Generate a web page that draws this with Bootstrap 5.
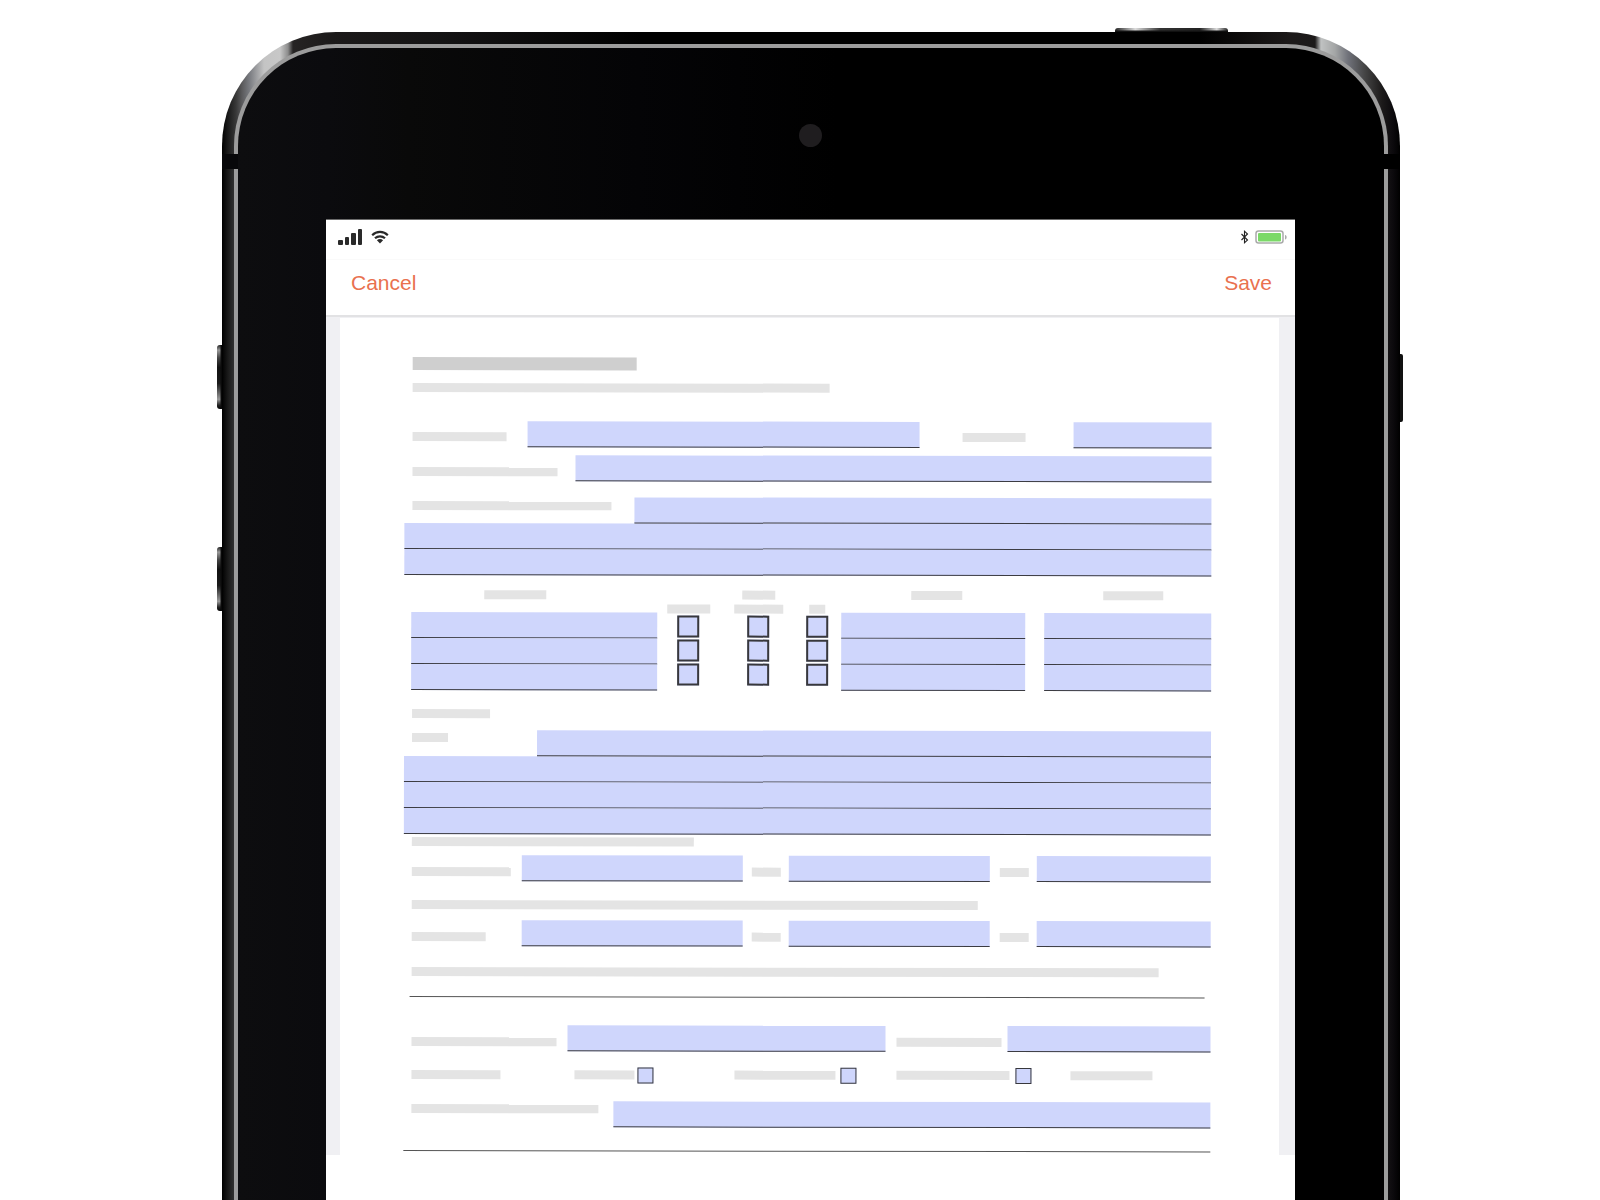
<!DOCTYPE html>
<html lang="en">
<head>
<meta charset="utf-8">
<meta name="viewport" content="width=device-width, initial-scale=1">
<title>Form editor</title>
<link href="https://cdn.jsdelivr.net/npm/bootstrap@5.3.0/dist/css/bootstrap.min.css" rel="stylesheet">
<style>
  :root { --field: #cfd6fc; --bar: #e4e4e4; --ink: #3c3c42; --accent: #e9714f; }
  body { background: #fff; font-family: "Liberation Sans", Arial, sans-serif; }
  .stage { padding: 32px 0 0 22px; overflow: hidden; }

  /* tablet body */
  .tablet {
    width: 100%; max-width: 1178px; padding: 12px 12px 0;
    border-radius: 114px 114px 0 0;
    background: linear-gradient(90deg, #000 0, #161616 5px, #383838 14px, #5a5a5c 20px, #77797e 27px,
      #c4c4c4 42px, #c8c8c8 58px, #8c8c8c 66px, #262424 71px, #1c1a1a 110px, #141314 220px, #000 420px,
      #000 calc(100% - 200px), #1c1919 calc(100% - 110px), #1c1a1a calc(100% - 85px), #c0c2c2 calc(100% - 79px),
      #a4a6a6 calc(100% - 65px), #70727a calc(100% - 52px), #444 calc(100% - 35px), #1c1a1a calc(100% - 18px),
      #0c0a0d calc(100% - 7px), #000 100%);
  }
  .bezel-ring { background: #9c9c9c; padding: 4px 4px 0; border-radius: 102px 102px 0 0; }
  .face {
    padding: 171px 89px 0 88px; border-radius: 98px 98px 0 0;
    background: linear-gradient(90deg, #0d0d0f 0, #0b0b0e 90px, #090909 170px, #040406 400px, #000 600px);
  }
  .camera { width: 23px; height: 23px; top: 92px; left: 50%; margin-left: -12px; background: #1f1d1f; }
  .antenna { top: 122px; width: 16px; height: 15px; background: #08080a; }
  .antenna-l { left: 0; }
  .antenna-r { right: 0; background: #000; }
  .side-key { width: 5px; height: 64px; left: -5px; border-radius: 3px 0 0 3px;
    background: linear-gradient(90deg, transparent 50%, #0a0a0a 90%),
      linear-gradient(180deg, #222 0, #999 8%, #444 20%, #111 35%, #1a1a1a 60%, #999 85%, #222 94%, #000 100%); }
  .key-up { top: 313px; }
  .key-down { top: 515px; }
  .lock-key { width: 3px; height: 68px; right: -3px; top: 322px; background: #111; border-radius: 0 2px 2px 0; }
  .top-key { width: 113px; height: 4px; top: -4px; right: 172px; border-radius: 3px 3px 0 0;
    background: linear-gradient(180deg, transparent 50%, #111 75%),
      linear-gradient(90deg, #222 0, #ddd 18%, #333 40%, #222 75%, #ddd 90%, #222 100%); }

  /* screen */
  .screen { background: #fff; border-top: 1px solid #6b6b6b; }
  .status { height: 40px; padding: 0 7px 6px 12px; border-bottom: 1px solid #fafafa; }
  .toolbar { height: 57px; padding: 0 23px 10px 25px; border-bottom: 2px solid #e2e2e4; }
  .action { color: var(--accent); font-size: 21px; line-height: 26px; }
  .action:hover { color: #c9512f; }
  .desk { background: #f0f0f3; padding: 1px 16px 0 14px; }
  .sheet { background: #fff; padding: 39px 68px 4px 64px; }
  /* the paper form lies very slightly askew */
  .paper-form { transform: rotate(.1deg); transform-origin: 0 50%; }

  /* form parts */
  .bar { display: block; height: 9px; background: var(--bar); }
  .bar-title { height: 13px; width: 224px; background: #cfcfcf; }
  .blank { display: block; width: 100%; min-width: 0; height: 26px; padding: 0 6px; border: 0; border-radius: 0;
    border-bottom: 1px solid var(--ink); background: var(--field); font-size: 16px; outline-offset: -2px; }
  .tick { appearance: none; display: block; margin: 0; width: 22px; height: 22px; background: var(--field); border: 2px solid #38383c; }
  .tick:checked { background: #6f80e0; }
  .tick-sm { width: 16px; height: 16px; border-width: 1px; }
  .rule { height: 1px; margin: 0; border: 0; background: #555; opacity: 1; }

  /* every line alternates a spacer column with an item column */
  .line { display: grid; }
  .line > * { grid-row: 1; }
  .line > :nth-child(1) { grid-column: 2; }
  .line > :nth-child(2) { grid-column: 4; }
  .line > :nth-child(3) { grid-column: 6; }
  .line > :nth-child(4) { grid-column: 8; }
  .line > :nth-child(5) { grid-column: 10; }
  .line > :nth-child(6) { grid-column: 12; }
  .line > :nth-child(7) { grid-column: 14; }
  .line > :nth-child(8) { grid-column: 16; }
  .low > .bar { margin-top: 12px; }
  .high > .bar { margin-top: 4px; }
  .g-name { grid-template-columns: 8px 94px 21px 392fr 43px 63px 48px 138fr; margin-top: 29px; }
  .g-name > .bar { margin-top: 11px; }
  .g-addr { grid-template-columns: 8px 145px 18px 1fr; margin-top: 8px; }
  .g-desc { grid-template-columns: 8px 199px 23px 1fr; margin-top: 16px; }
  .g-head { grid-template-columns: 80fr 62px 196fr 33px 136fr 51px 141fr 60px 48fr; margin-top: 15px; }
  .g-subhead { grid-template-columns: 263fr 43px 24fr 49px 26fr 16px 386fr; margin-top: 5px; }
  .g-table { grid-template-columns: 7px 246fr 20px 22px 48px 22px 37px 22px 13px 184fr 19px 167fr; margin-top: -1px; }
  .ticks { display: grid; gap: 2px; align-content: start; padding-top: 3px; }
  .g-note { grid-template-columns: 8px 36px 89px 1fr; margin-top: 12px; }
  .g-note > .bar { margin-top: 3px; }
  .g-trio { grid-template-columns: 8px 99px 11px 221fr 9px 29px 8px 201fr 10px 29px 8px 174fr; margin-top: 9px; }
  .g-trio-b { margin-top: 11px; }
  .g-trio .bar-short { margin-right: 25px; }
  .g-sign { grid-template-columns: 8px 145px 11px 318fr 11px 105px 6px 203fr; margin-top: 28px; }
  .g-opts { grid-template-columns: 8px 89px 74fr 60px 3px 16px 81fr 101px 5px 16px 40fr 113px 6px 16px 39fr 82px 58fr; margin-top: 16px; }
  .g-opts > .bar { margin-top: 3px; }
  .g-other { grid-template-columns: 8px 187px 15px 1fr; margin-top: 18px; }
  .g-other > .bar { margin-top: 3px; }
  .lead-in { margin-left: 8px; max-width: 100%; }
  .w-intro { width: 417px; margin-top: 13px; }
  .w-topic { width: 78px; margin-top: 19px; }
  .w-second { width: 282px; margin-top: 3px; }
  .w-third { width: 566px; margin-top: 19px; }
  .w-fourth { width: 747px; margin-top: 21px; }
  .rule-mid { margin: 20px 6px 0 6px; }
  .rule-end { margin-top: 23px; }
</style>
<script src="https://cdn.jsdelivr.net/npm/bootstrap@5.3.0/dist/js/bootstrap.bundle.min.js"></script>
</head>
<body>
<div class="stage min-vh-100 d-flex flex-column align-items-center">
  <div class="tablet position-relative flex-grow-1 d-flex flex-column">
    <span class="side-key key-up position-absolute"></span>
    <span class="side-key key-down position-absolute"></span>
    <span class="lock-key position-absolute"></span>
    <span class="top-key position-absolute"></span>
    <div class="bezel-ring flex-grow-1 d-flex flex-column">
      <div class="face flex-grow-1 d-flex flex-column">
        <main class="screen flex-grow-1">
          <div class="status d-flex align-items-center justify-content-between">
            <svg width="52" height="18" viewBox="0 0 52 18" fill="#2a2a2a" aria-hidden="true">
              <rect x="0" y="12" width="5" height="5" rx="1"/><rect x="7" y="9" width="4" height="8" rx="1"/>
              <rect x="13" y="5" width="5" height="12" rx="1"/><rect x="20" y="1" width="4" height="16" rx="1"/>
              <g fill="none" stroke="#2a2a2a" stroke-width="2.2"><path d="M34.2 7.2a11 11 0 0 1 15.600 0"/><path d="M37 10.300a7.200 7.200 0 0 1 10 0"/></g>
              <path d="M38.900 12.300a4.700 4.700 0 0 1 6.200 0L42 15.500z"/>
            </svg>
            <svg width="48" height="16" viewBox="0 0 48 16" fill="none" aria-hidden="true">
              <path d="M1.500 5l6 6-3 2.800v-11.600l3 2.800-6 6" stroke="#222" stroke-width="1.100"/>
              <rect x="16" y="2" width="27" height="12" rx="2.500" stroke="#aaa" stroke-width="1.500"/>
              <rect x="18" y="4" width="23" height="8.500" rx="1" fill="#7bd968"/>
              <path d="M45 6c2.200.5 2.200 4 0 4.500z" fill="#aaa"/>
            </svg>
          </div>
          <nav class="toolbar d-flex align-items-center justify-content-between">
            <button type="button" class="action btn p-0 border-0">Cancel</button>
            <button type="submit" form="paper" class="action btn p-0 border-0">Save</button>
          </nav>
          <div class="desk">
            <div class="sheet">
              <form id="paper" class="paper-form" onsubmit="return false">
                <div class="bar bar-title lead-in"></div>
                <div class="bar lead-in w-intro"></div>

                <div class="line low g-name">
                  <label class="bar" for="f1"></label><input class="blank" id="f1" aria-label="Name">
                  <label class="bar" for="f2"></label><input class="blank" id="f2" aria-label="Date">
                </div>
                <div class="line low g-addr">
                  <label class="bar" for="f3"></label><input class="blank" id="f3" aria-label="Address">
                </div>
                <div class="line high g-desc">
                  <label class="bar" for="f4"></label><input class="blank" id="f4" aria-label="Description">
                </div>
                <input class="blank" aria-label="Description, line 2">
                <input class="blank" aria-label="Description, line 3">

                <div class="line g-head"><span class="bar"></span><span class="bar"></span><span class="bar"></span><span class="bar"></span></div>
                <div class="line g-subhead"><span class="bar"></span><span class="bar"></span><span class="bar"></span></div>
                <div class="line g-table">
                  <div><input class="blank" aria-label="Item 1"><input class="blank" aria-label="Item 2"><input class="blank" aria-label="Item 3"></div>
                  <div class="ticks"><input type="checkbox" class="tick" aria-label="Item 1, first choice"><input type="checkbox" class="tick" aria-label="Item 2, first choice"><input type="checkbox" class="tick" aria-label="Item 3, first choice"></div>
                  <div class="ticks"><input type="checkbox" class="tick" aria-label="Item 1, second choice"><input type="checkbox" class="tick" aria-label="Item 2, second choice"><input type="checkbox" class="tick" aria-label="Item 3, second choice"></div>
                  <div class="ticks"><input type="checkbox" class="tick" aria-label="Item 1, third choice"><input type="checkbox" class="tick" aria-label="Item 2, third choice"><input type="checkbox" class="tick" aria-label="Item 3, third choice"></div>
                  <div><input class="blank" aria-label="Detail 1"><input class="blank" aria-label="Detail 2"><input class="blank" aria-label="Detail 3"></div>
                  <div><input class="blank" aria-label="Remark 1"><input class="blank" aria-label="Remark 2"><input class="blank" aria-label="Remark 3"></div>
                </div>

                <div class="bar lead-in w-topic"></div>
                <div class="line high g-note">
                  <label class="bar" for="f5"></label><input class="blank" id="f5" aria-label="Notes">
                </div>
                <input class="blank" aria-label="Notes, line 2">
                <input class="blank" aria-label="Notes, line 3">
                <input class="blank" aria-label="Notes, line 4">

                <div class="bar lead-in w-second"></div>
                <div class="line low g-trio">
                  <label class="bar" for="f6"></label><input class="blank" id="f6" aria-label="Contact">
                  <label class="bar" for="f7"></label><input class="blank" id="f7" aria-label="Contact phone">
                  <label class="bar" for="f8"></label><input class="blank" id="f8" aria-label="Contact date">
                </div>
                <div class="bar lead-in w-third"></div>
                <div class="line low g-trio g-trio-b">
                  <label class="bar bar-short" for="f9"></label><input class="blank" id="f9" aria-label="Witness">
                  <label class="bar" for="f10"></label><input class="blank" id="f10" aria-label="Witness phone">
                  <label class="bar" for="f11"></label><input class="blank" id="f11" aria-label="Witness date">
                </div>
                <div class="bar lead-in w-fourth"></div>
                <hr class="rule rule-mid">

                <div class="line low g-sign">
                  <label class="bar" for="f12"></label><input class="blank" id="f12" aria-label="Signed by">
                  <label class="bar" for="f13"></label><input class="blank" id="f13" aria-label="Signed on">
                </div>
                <div class="line g-opts">
                  <span class="bar"></span>
                  <label class="bar" for="c1"></label><input type="checkbox" class="tick tick-sm" id="c1" aria-label="Option 1">
                  <label class="bar" for="c2"></label><input type="checkbox" class="tick tick-sm" id="c2" aria-label="Option 2">
                  <label class="bar" for="c3"></label><input type="checkbox" class="tick tick-sm" id="c3" aria-label="Option 3">
                  <span class="bar"></span>
                </div>
                <div class="line high g-other">
                  <label class="bar" for="f14"></label><input class="blank" id="f14" aria-label="Other">
                </div>
                <hr class="rule rule-end">
              </form>
            </div>
          </div>
        </main>
      </div>
    </div>
    <span class="antenna antenna-l position-absolute"></span>
    <span class="antenna antenna-r position-absolute"></span>
    <span class="camera position-absolute rounded-circle"></span>
  </div>
</div>
</body>
</html>
